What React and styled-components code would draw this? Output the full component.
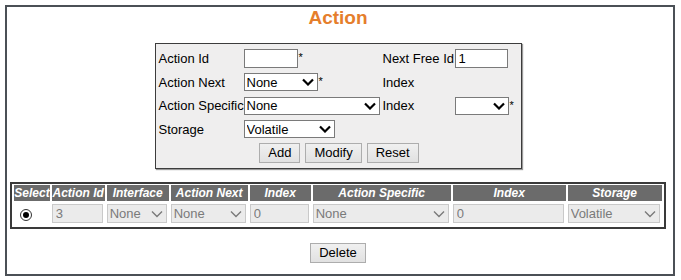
import React from "react";
import styled, {createGlobalStyle} from "styled-components";

const GlobalStyle = createGlobalStyle`
    html, body {
        margin: 0;
        padding: 0;
        background: #ffffff;
        font-family: "Liberation Sans", Arial, sans-serif;
        font-size: 13px;
        color: #000000;
    }
`;

const Frame = styled.div`
    box-sizing: border-box;
    margin: 5px;
    padding-right: 4px;
    width: 670px;
    height: 271px;
    border: 2px solid #4b5056;
    display: flex;
    flex-direction: column;
    align-items: center;
`;

const Title = styled.h1`
    margin: 0;
    height: 22px;
    line-height: 22px;
    font-family: "Liberation Sans", Arial, sans-serif;
    font-size: 19px;
    font-weight: bold;
    color: #e57e2c;
`;

const FormBox = styled.div`
    margin-top: 14px;
    padding: 3px;
    border: 1px solid #3c3c3c;
    box-shadow: 1px 1px 1px #9a9a9a;
    background: #efeeee;
    display: grid;
    grid-template-columns: 85px 139px 72px 63px;
    grid-auto-rows: 23.5px;
    align-items: center;
`;

const Label = styled.span`
    white-space: nowrap;
`;

const Cell = styled.span`
    display: flex;
    align-items: center;
`;

const Star = styled.span`
    font-size: 11px;
    align-self: flex-start;
    margin-top: 2px;
    margin-left: 1px;
`;

const TextInput = styled.input`
    box-sizing: border-box;
    width: ${p => p.$w}px;
    height: ${p => p.$h || 19}px;
    margin: 0;
    padding: 0 3px;
    border: 1px solid ${p => (p.disabled ? "#c9c9c9" : "#7a7a7a")};
    background: ${p => (p.disabled ? "#ebebeb" : "#ffffff")};
    color: ${p => (p.disabled ? "#7a7a7a" : "#000000")};
    font-family: inherit;
    font-size: 13px;
`;

const SelectWrap = styled.span`
    position: relative;
    display: inline-block;
    width: ${p => p.$w}px;
    height: ${p => p.$h || 18}px;
`;

const SelectBox = styled.select`
    appearance: none;
    box-sizing: border-box;
    width: 100%;
    height: 100%;
    margin: 0;
    padding: 0 2px;
    border: 1px solid ${p => (p.disabled ? "#c9c9c9" : "#7a7a7a")};
    border-radius: 0;
    background: ${p => (p.disabled ? "#ebebeb" : "#ffffff")};
    color: ${p => (p.disabled ? "#7a7a7a" : "#000000")};
    font-family: inherit;
    font-size: 13px;
    opacity: 1;
`;

const Chevron = styled.svg`
    position: absolute;
    right: 4px;
    top: 50%;
    transform: translateY(-50%);
    pointer-events: none;
`;

const Select = ({w, h, value, disabled}) => (
    <SelectWrap $w={w} $h={h}>
        <SelectBox disabled={disabled} defaultValue={value}>
            <option value={value}>{value}</option>
        </SelectBox>
        <Chevron width="12" height="8" viewBox="0 0 12 8">
            <path d="M1 1.5 L6 6.5 L11 1.5" fill="none"
                  stroke={disabled ? "#7a7a7a" : "#000"}
                  strokeWidth={disabled ? 1.4 : 2.2}/>
        </Chevron>
    </SelectWrap>
);

const ButtonRow = styled.div`
    grid-column: 1 / -1;
    display: flex;
    justify-content: center;
    gap: 5px;
    padding-left: 2px;
`;

const Button = styled.button`
    box-sizing: border-box;
    height: 20px;
    margin: 0;
    padding: 0 8px;
    border: 1px solid #adadad;
    background: linear-gradient(#f0f0f0, #e1e1e1);
    font-family: inherit;
    font-size: 13px;
    color: #000000;
`;

const Table = styled.table`
    margin-top: 13px;
    border: 2px solid #3a3a3a;
    border-spacing: 2px 1px;
    padding: 0;
`;

const Th = styled.th`
    width: ${p => p.$w}px;
    height: 16px;
    padding: 0;
    background: #6b6b6b;
    color: #ffffff;
    font-size: 12px;
    font-weight: bold;
    font-style: italic;
    text-align: center;
    white-space: nowrap;
`;

const Td = styled.td`
    height: 24px;
    padding: 0 0 0 ${p => p.$pad || 0}px;
`;

const Radio = styled.span`
    display: inline-flex;
    align-items: center;
    justify-content: center;
    box-sizing: border-box;
    width: 12px;
    height: 12px;
    border: 1px solid #333;
    border-radius: 50%;
    background: #fff;
    vertical-align: middle;

    &::after {
        content: "";
        width: 6px;
        height: 6px;
        border-radius: 50%;
        background: #000;
    }
`;

const DeleteRow = styled.div`
    margin-top: 14px;
`;

const columns = [
    {name: "Select", w: 35},
    {name: "Action Id", w: 53},
    {name: "Interface", w: 62},
    {name: "Action Next", w: 77},
    {name: "Index", w: 61},
    {name: "Action Specific", w: 138},
    {name: "Index", w: 113},
    {name: "Storage", w: 94},
];

export default function App() {
    return (
        <>
            <GlobalStyle/>
            <Frame>
                <Title>Action</Title>
                <FormBox>
                    <Label>Action Id</Label>
                    <Cell><TextInput $w={54}/><Star>*</Star></Cell>
                    <Label>Next Free Id</Label>
                    <Cell><TextInput $w={53} defaultValue="1"/></Cell>

                    <Label>Action Next</Label>
                    <Cell><Select w={74} value="None"/><Star>*</Star></Cell>
                    <Label>Index</Label>
                    <Cell/>

                    <Label>Action Specific</Label>
                    <Cell><Select w={136} value="None"/></Cell>
                    <Label>Index</Label>
                    <Cell><Select w={54} value=""/><Star>*</Star></Cell>

                    <Label>Storage</Label>
                    <Cell><Select w={91} value="Volatile"/></Cell>
                    <Cell/>
                    <Cell/>

                    <ButtonRow>
                        <Button>Add</Button>
                        <Button>Modify</Button>
                        <Button>Reset</Button>
                    </ButtonRow>
                </FormBox>

                <Table>
                    <thead>
                    <tr>
                        {columns.map((c, i) => <Th key={i} $w={c.w}>{c.name}</Th>)}
                    </tr>
                    </thead>
                    <tbody>
                    <tr>
                        <Td $pad={6}><Radio/></Td>
                        <Td><TextInput $w={51} $h={19} disabled defaultValue="3"/></Td>
                        <Td><Select w={60} h={19} disabled value="None"/></Td>
                        <Td><Select w={75} h={19} disabled value="None"/></Td>
                        <Td><TextInput $w={59} $h={19} disabled defaultValue="0"/></Td>
                        <Td><Select w={136} h={19} disabled value="None"/></Td>
                        <Td><TextInput $w={111} $h={19} disabled defaultValue="0"/></Td>
                        <Td><Select w={92} h={19} disabled value="Volatile"/></Td>
                    </tr>
                    </tbody>
                </Table>

                <DeleteRow>
                    <Button>Delete</Button>
                </DeleteRow>
            </Frame>
        </>
    );
}
